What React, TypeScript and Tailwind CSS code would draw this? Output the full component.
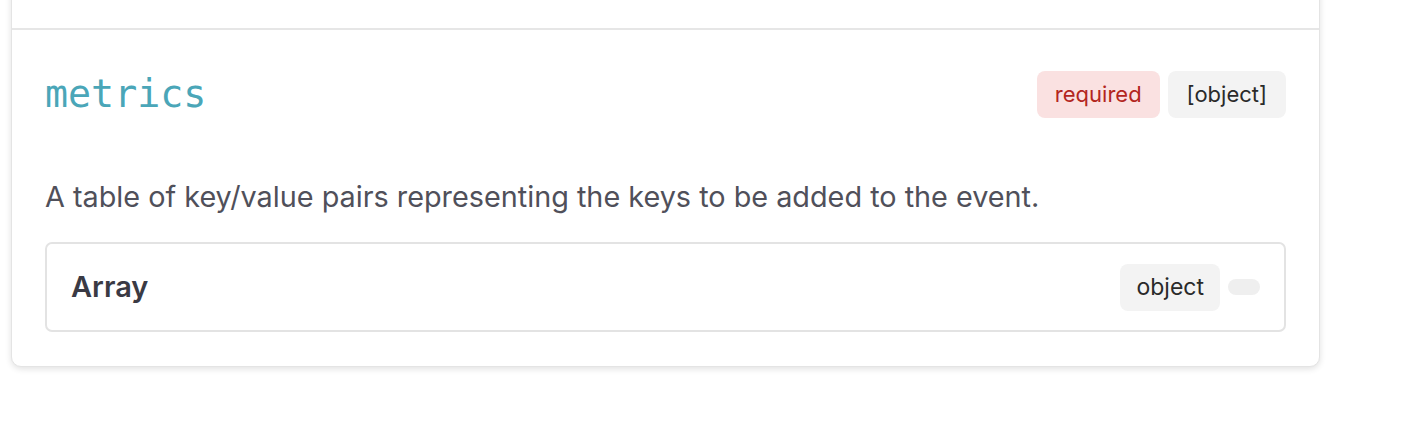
export default function App() {
  return (
    <div className="h-[428px] overflow-hidden bg-white pl-[11px] font-['Inter','Noto_Sans',sans-serif]">
      <div className="-mt-[41px] w-[1309px] rounded-[10px] border border-[#e4e4e4] bg-white shadow-[0_2px_6px_rgba(0,0,0,0.12)]">
        <div className="h-[68px]" />
        <section className="border-t-2 border-[#e6e6e6] px-[33px] pt-[40px] pb-[34px]">
          <div className="flex items-center justify-between">
            <h3 className="font-['DejaVu_Sans_Mono',monospace] text-[38.3px] leading-[48px] text-[#4aa6b8]">
              metrics
            </h3>
            <div className="flex gap-2">
              <span className="rounded-[8px] bg-[#fae1e1] px-[18px] py-[10px] text-[22px] leading-[27px] text-[#b3261e]">
                required
              </span>
              <span className="rounded-[8px] bg-[#f3f3f3] px-[19px] py-[10px] text-[22px] leading-[27px] text-[#2a2a2a]">
                [object]
              </span>
            </div>
          </div>
          <p className="mt-[61px] text-[28.8px] leading-[35px] text-[#50505a]">
            A table of key/value pairs representing the keys to be added to the event.
          </p>
          <div className="mt-[28px] flex h-[90px] items-center justify-between rounded-[7px] border-2 border-[#e3e3e3] pl-[24px] pr-[24px]">
            <span className="text-[29px] font-semibold text-[#3a3a44]">Array</span>
            <div className="flex items-center gap-2">
              <span className="rounded-[8px] bg-[#f3f3f3] px-[16px] py-[10px] text-[23px] leading-[27px] text-[#2a2a2a]">
                object
              </span>
              <span className="h-[16px] w-[32px] rounded-full bg-[#efefef]" />
            </div>
          </div>
        </section>
      </div>
    </div>
  );
}
